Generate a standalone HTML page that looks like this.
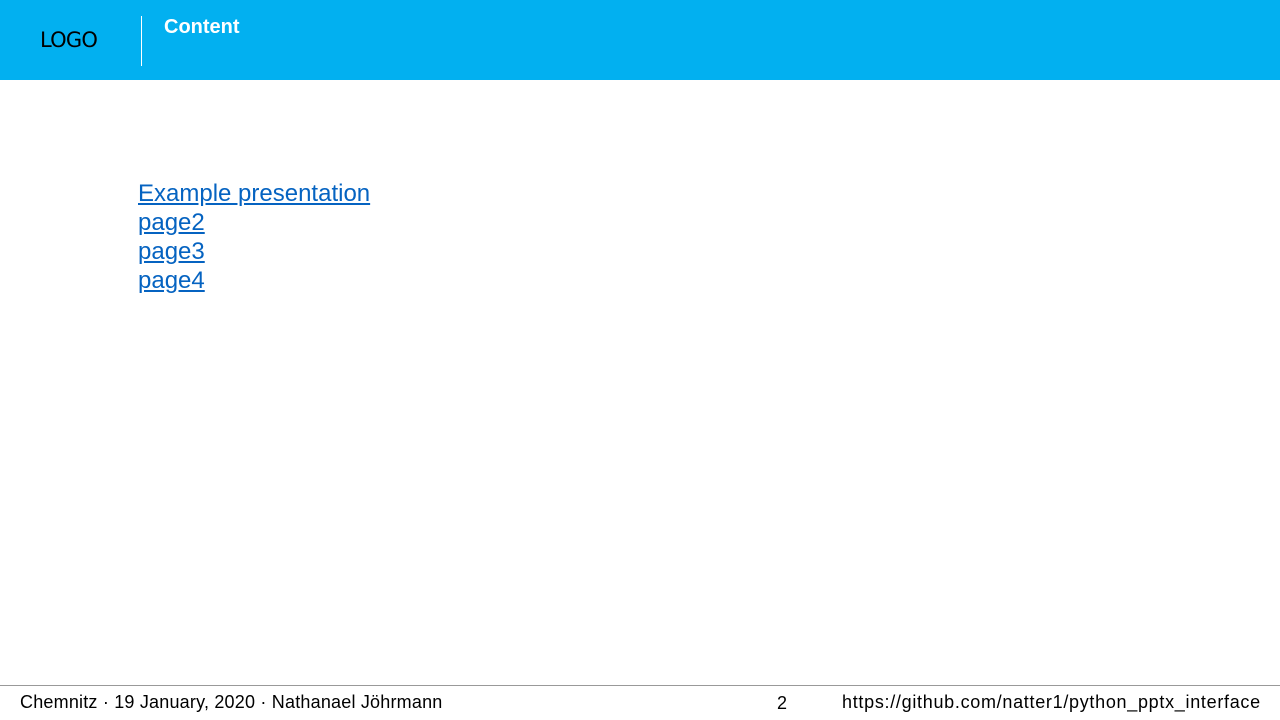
<!DOCTYPE html>
<html><head><meta charset="utf-8"><style>
body{margin:0;width:1280px;height:720px;position:relative;background:#fff;font-family:"Liberation Sans",sans-serif;overflow:hidden}
.hdr{position:absolute;left:0;top:0;width:1280px;height:80px;background:#02b0f0}
.logo{position:absolute;left:40px;top:28px;font-size:21px;color:#000;font-family:"DejaVu Sans","Liberation Sans",sans-serif;letter-spacing:-0.8px}
.vl{position:absolute;left:141px;top:16px;width:1px;height:50px;background:#fff}
.title{position:absolute;left:164px;top:16px;color:#fff;font-weight:bold;font-size:20px}
.links{position:absolute;left:138px;top:179px;font-size:24px;line-height:29px}
.links a{color:#0563c1;text-decoration:underline;display:block}
.fl{position:absolute;left:0;top:685px;width:1280px;height:1px;background:#999}
.ft{position:absolute;top:692px;font-size:18px;color:#000}
</style></head><body>
<div class="hdr"><div class="logo">LOGO</div><div class="vl"></div><div class="title">Content</div></div>
<div class="links"><a>Example presentation</a><a>page2</a><a>page3</a><a>page4</a></div>
<div class="fl"></div>
<div class="ft" style="left:20px;letter-spacing:0.2px">Chemnitz · 19 January, 2020 · Nathanael Jöhrmann</div>
<div class="ft" style="left:777px;top:693px">2</div>
<div class="ft" style="left:842px;letter-spacing:0.7px">https://github.com/natter1/python_pptx_interface</div>
</body></html>
